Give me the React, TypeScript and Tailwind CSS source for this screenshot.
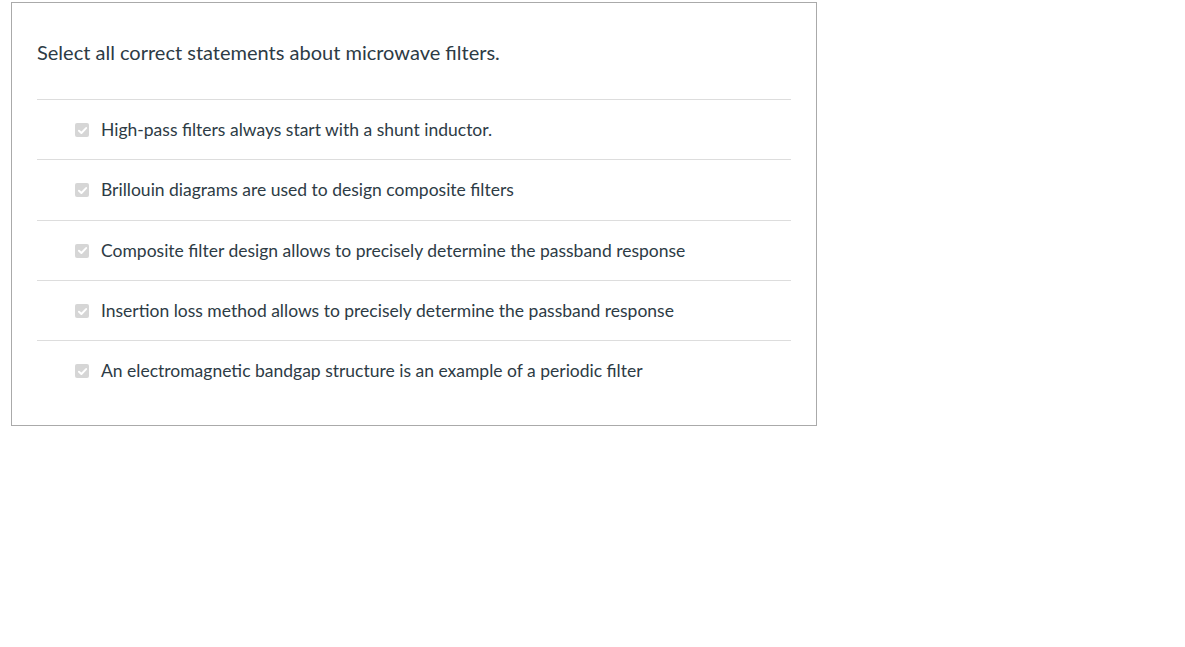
import React from "react";

const items = [
  "High-pass filters always start with a shunt inductor.",
  "Brillouin diagrams are used to design composite filters",
  "Composite filter design allows to precisely determine the passband response",
  "Insertion loss method allows to precisely determine the passband response",
  "An electromagnetic bandgap structure is an example of a periodic filter",
];

function Check() {
  return (
    <span className="flex h-[14px] w-[14px] shrink-0 items-center justify-center rounded-[2px] bg-[#d6d6d6]">
      <svg width="11" height="11" viewBox="0 0 10 10" fill="none">
        <path d="M1.8 5.2 L4 7.3 L8.3 2.8" stroke="white" strokeWidth="1.8" strokeLinecap="round" strokeLinejoin="round" />
      </svg>
    </span>
  );
}

export default function App() {
  return (
    <div className="min-h-[647px] bg-white pl-[11px] pt-[2px]" style={{ fontFamily: "Lato, 'Noto Sans', sans-serif" }}>
      <div className="box-border h-[424px] w-[806px] border border-[#aaaaaa] px-[25px] pt-[34px] text-[#2d3b45]">
        <div className="h-[30px] text-[20px] leading-[30px]">Select all correct statements about microwave filters.</div>
        <div className="mt-[32px]">
          {items.map((t) => (
            <div key={t} className="flex h-[60.3px] items-center border-t border-[#dddddd] pl-[38px] pt-[1px]">
              <Check />
              <span className="ml-[12px] text-[17.5px] leading-[22px]">{t}</span>
            </div>
          ))}
        </div>
      </div>
    </div>
  );
}
